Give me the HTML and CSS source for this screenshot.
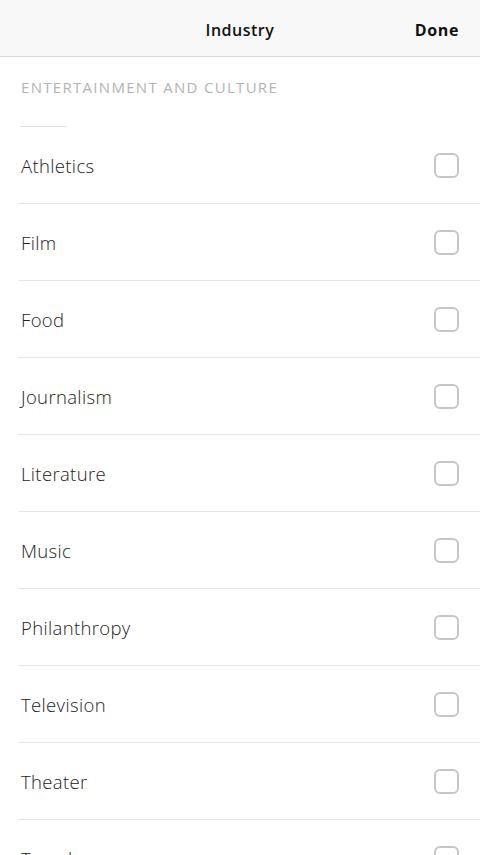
FILE: index.html
```html
<!DOCTYPE html>
<html lang="en">
<head>
    <meta charset="UTF-8">
    <meta name="viewport" content="width=device-width, initial-scale=1.0">
    <title>Industry</title>
    <link rel="stylesheet" href="styles.css">
</head>
<body>
    <header class="topbar">
        <span class="spacer"></span>
        <h1>Industry</h1>
        <a class="done" href="#">Done</a>
    </header>
    <main class="picker">
        <h2 class="section">ENTERTAINMENT AND CULTURE</h2>
        <div class="stub"></div>
        <ul class="options">
            <li><span>Athletics</span><span class="box"></span></li>
            <li><span>Film</span><span class="box"></span></li>
            <li><span>Food</span><span class="box"></span></li>
            <li><span>Journalism</span><span class="box"></span></li>
            <li><span>Literature</span><span class="box"></span></li>
            <li><span>Music</span><span class="box"></span></li>
            <li><span>Philanthropy</span><span class="box"></span></li>
            <li><span>Television</span><span class="box"></span></li>
            <li><span>Theater</span><span class="box"></span></li>
            <li><span>Travel</span><span class="box"></span></li>
        </ul>
    </main>
</body>
</html>
```

FILE: styles.css
```css
* {
    margin: 0;
    padding: 0;
    box-sizing: border-box;
}

body {
    font-family: "Open Sans", "Liberation Sans", sans-serif;
    background: #fff;
    color: #222;
    height: 855px;
    overflow: hidden;
}

.topbar {
    height: 57px;
    background: #f8f8f8;
    border-bottom: 1px solid #d9d9d9;
    display: flex;
    align-items: center;
    justify-content: space-between;
    padding: 4px 21px 0 21px;
}

.topbar .spacer {
    width: 44px;
}

.topbar h1 {
    font-size: 16px;
    font-weight: 600;
    letter-spacing: 0.5px;
    color: #111;
}

.done {
    font-size: 16px;
    font-weight: 700;
    letter-spacing: 0.6px;
    color: #111;
    text-decoration: none;
}

.section {
    font-size: 15px;
    font-weight: 400;
    color: #b3b3b3;
    letter-spacing: 1.3px;
    padding: 20px 0 0 21px;
    height: 61px;
}

.stub {
    width: 46px;
    height: 1px;
    background: #e3e3e3;
    margin-left: 20px;
    margin-top: 8px;
}

.options {
    list-style: none;
    margin-left: 18px;
}

.options li {
    height: 77px;
    display: flex;
    align-items: center;
    justify-content: space-between;
    padding: 0 21px 0 3px;
    border-bottom: 1px solid #e6e6e6;
    font-size: 18.5px;
    font-weight: 300;
    letter-spacing: 0.35px;
    color: #222;
}

.box {
    width: 25px;
    height: 25px;
    border: 2px solid #c6c6c6;
    border-radius: 6px;
}
```
